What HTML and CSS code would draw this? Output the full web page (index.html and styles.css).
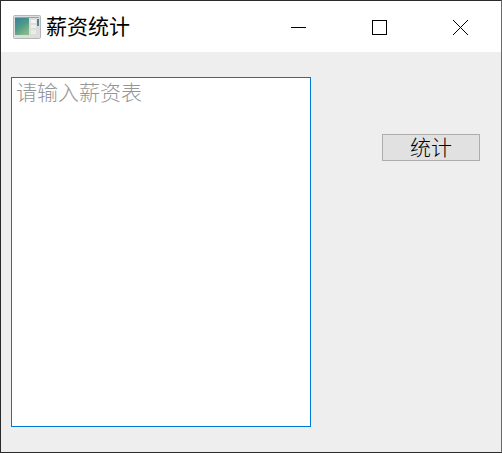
FILE: index.html
```html
<!DOCTYPE html>
<html lang="zh-CN">
<head>
    <meta charset="UTF-8">
    <title>薪资统计</title>
    <link rel="stylesheet" href="styles.css">
</head>
<body>
    <div class="window">
        <div class="titlebar">
            <svg class="app-icon" width="28" height="24" viewBox="0 0 28 24">
                <defs>
                    <linearGradient id="pane" x1="0" y1="0" x2="0.6" y2="1">
                        <stop offset="0" stop-color="#3a7f9c"/>
                        <stop offset="0.55" stop-color="#4f9a88"/>
                        <stop offset="1" stop-color="#86b88a"/>
                    </linearGradient>
                </defs>
                <rect x="0.5" y="0.5" width="27" height="23" rx="1" fill="#dcdedd" stroke="#b4b7b7"/>
                <rect x="2" y="3" width="14" height="17" fill="url(#pane)"/>
                <rect x="2" y="2" width="24" height="1" fill="#98a5a6"/>
                <rect x="18" y="5" width="5" height="3" fill="#f4f4f0"/>
                <rect x="18" y="10" width="5" height="3" fill="#f0f0ea"/>
                <rect x="18" y="15" width="5" height="4" fill="#ecece6"/>
                <rect x="24" y="4" width="2" height="7" fill="#4a8591"/>
            </svg>
            <span class="title">薪资统计</span>
            <div class="controls">
                <button class="ctl">
                    <svg width="16" height="16" viewBox="0 0 16 16"><path d="M1 8.5H16" stroke="#000" fill="none"/></svg>
                </button>
                <button class="ctl">
                    <svg width="16" height="16" viewBox="0 0 16 16"><rect x="1.5" y="1.5" width="14" height="14" stroke="#000" fill="none"/></svg>
                </button>
                <button class="ctl">
                    <svg width="16" height="16" viewBox="0 0 16 16"><path d="M1 1L16 16M16 1L1 16" stroke="#000" fill="none"/></svg>
                </button>
            </div>
        </div>
        <div class="content">
            <textarea class="salary-input" placeholder="请输入薪资表"></textarea>
            <button class="stat-btn">统计</button>
        </div>
    </div>
</body>
</html>
```

FILE: styles.css
```css
html, body {
    margin: 0;
    padding: 0;
}
body {
    font-family: "Noto Sans CJK SC", "Liberation Sans", sans-serif;
}
.window {
    box-sizing: border-box;
    width: 502px;
    height: 453px;
    border: 1px solid #2b2b2b;
    border-right-color: #6a6a6a;
    background: #eeeeee;
    display: flex;
    flex-direction: column;
    overflow: hidden;
}
.titlebar {
    height: 51px;
    background: white;
    display: flex;
    align-items: center;
    flex-shrink: 0;
}
.app-icon {
    margin: 0 0 0 12px;
}
.title {
    margin-left: 5px;
    font-size: 21px;
    color: #000;
    line-height: 49px;
    padding-bottom: 2px;
    font-weight: 400;
}
.controls {
    margin-left: auto;
    margin-right: 1px;
    display: flex;
}
.ctl {
    width: 81px;
    height: 51px;
    padding: 0;
    border: none;
    background: none;
    display: flex;
    align-items: center;
    justify-content: center;
}
.content {
    flex: 1;
    display: flex;
    align-items: flex-start;
}
.salary-input {
    box-sizing: border-box;
    width: 300px;
    height: 350px;
    margin: 25px 0 0 10px;
    padding: 0 4px;
    border: 1px solid #0078d7;
    border-radius: 0;
    background: white;
    outline: none;
    resize: none;
    font-family: "Noto Sans CJK SC", sans-serif;
    font-size: 21px;
    font-weight: 300;
    line-height: 27px;
}
.salary-input::placeholder {
    color: #969696;
    opacity: 1;
}
.stat-btn {
    box-sizing: border-box;
    width: 98px;
    height: 27px;
    margin: 82px 0 0 71px;
    padding: 0 0 2px;
    border: 1px solid #adadad;
    border-radius: 0;
    background: #e1e1e1;
    color: #000;
    font-family: "Noto Sans CJK SC", sans-serif;
    font-size: 21px;
    font-weight: 300;
    line-height: 23px;
}
```
